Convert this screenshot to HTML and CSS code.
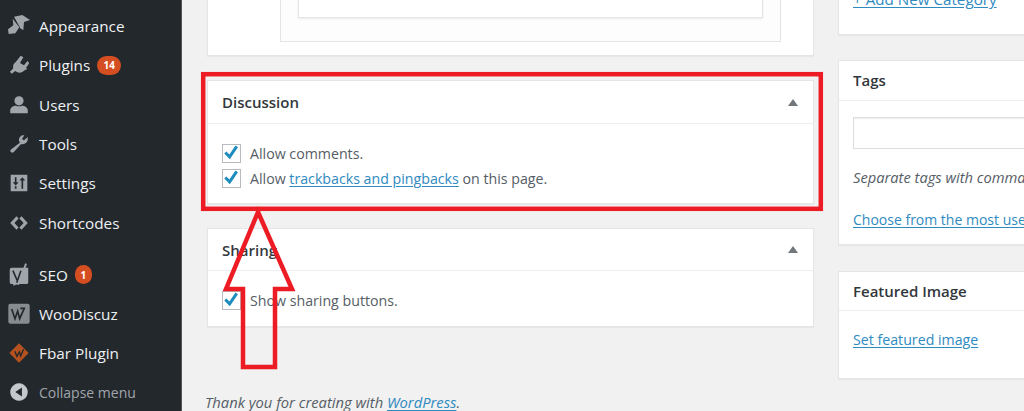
FILE: index.html
```html
<!DOCTYPE html>
<html lang="en">
<head>
<meta charset="utf-8">
<title>Edit Page</title>
<link rel="stylesheet" href="styles.css">
</head>
<body>
<div class="page">
  <nav class="sidebar">
    <a class="item"><svg class="icon big" viewBox="22 45 66 66"><path d="M40 50 L65 45 L88 60 L70 66 L68 90 L60 86 Z"/><path d="M36 56 L56 82 L48 94 L44 100 L24 102 L22 88 L38 76 Z"/></svg><span>Appearance</span></a>
    <a class="item"><svg class="icon" viewBox="25 166 60 60"><path d="M33 222 L28 216 L38 206 C35 196 41 190 46 186 L60 168 L68 173 L58 190 L70 197 L80 184 L86 190 L76 205 L80 208 L72 212 C62 222 52 220 44 214 Z"/></svg><span>Plugins</span><b class="badge wide">14</b></a>
    <a class="item"><svg class="icon" viewBox="0 0 24 24"><circle cx="12" cy="7" r="5.500"/><path d="M1.500 22 V18 C1.500 14.500 6 13 8 12.500 C10 14 14 14 16 12.500 C18 13 22.500 14.500 22.500 18 V22 Z"/></svg><span>Users</span></a>
    <a class="item"><svg class="icon" viewBox="0 0 24 24"><path d="M22.500 3.500 L18 7.500 L15.500 6 L18.500 1.500 C15 1 11.500 3.500 12 8 L13 10.500 L2 19 C.5 21 3 23.500 5.500 22 L14.500 12 C18 13 22 11 22.500 7 Z"/></svg><span>Tools</span></a>
    <a class="item"><svg class="icon" viewBox="0 0 24 24"><path fill-rule="evenodd" d="M2 2 H22 V22 H2 Z M7 5 V11 H4.500 L8 15 L11.500 11 H9 V5 Z M16 5 L12.500 9 H15 V19 H17 V9 H19.500 Z M7 16 V19 H9 V16 Z"/></svg><span>Settings</span></a>
    <a class="item gap"><svg class="icon" viewBox="0 0 24 24"><path d="M9 4 L11.500 6.500 L6.500 12 L11.500 17.500 L9 20 L1.500 12 Z M15 4 L22.500 12 L15 20 L12.500 17.500 L17.500 12 L12.500 6.500 Z"/></svg><span>Shortcodes</span></a>
    <a class="item seo"><svg class="icon tall" viewBox="22 172 62 72"><path d="M30 187 H82 V232 Q82 238 76 238 H50 L35 243 V238 H30 Q24 238 24 232 V193 Q24 187 30 187 Z"/><path class="cut" d="M34 196 L47 226 M59 196 L46 234"/><path class="slash" d="M75 174 L50 240"/></svg><span>SEO</span><b class="badge">1</b></a>
    <a class="item"><svg class="icon big wd" viewBox="21 298 66 66"><rect x="22" y="300" width="64" height="60" rx="6"/><path class="cut" d="M32 316 L42 345 L50 322 L56 345 L70 314 H58"/></svg><span>WooDiscuz</span></a>
    <a class="item"><svg class="icon fbar" viewBox="26 414 58 58"><path d="M55 415 L83 443 L55 471 L27 443 Z"/><path class="cut thin" d="M43 438 L49 453 L56 440 L60 452 L68 432"/></svg><span>Fbar Plugin</span></a>
    <a class="item collapse"><svg class="icon" viewBox="0 0 24 24"><path fill-rule="evenodd" d="M12 1.500 A10.500 10.500 0 1 1 11.990 1.500 Z M15.500 6.500 L7.500 12 L15.500 17.500 Z"/></svg><span>Collapse menu</span></a>
  </nav>

  <div class="content">
    <div class="columns">
      <main class="main-col">
        <section class="card top-card">
          <div class="tab-panel">
            <div class="tab-inner"></div>
          </div>
        </section>

        <section class="card discussion">
          <header class="card-head"><h2>Discussion</h2><i class="caret"></i></header>
          <div class="card-body checks">
            <label class="check"><svg class="box" viewBox="0 0 20 20"><rect x=".5" y=".5" width="19" height="19"/><path d="M3.500 9 L8 13.500 L15.500 2.500"/></svg>Allow comments.</label>
            <label class="check"><svg class="box" viewBox="0 0 20 20"><rect x=".5" y=".5" width="19" height="19"/><path d="M3.500 9 L8 13.500 L15.500 2.500"/></svg><span>Allow <a class="link">trackbacks and pingbacks</a> on this page.</span></label>
          </div>
        </section>

        <section class="card sharing">
          <header class="card-head"><h2>Sharing</h2><i class="caret"></i></header>
          <div class="card-body checks">
            <label class="check"><svg class="box" viewBox="0 0 20 20"><rect x=".5" y=".5" width="19" height="19"/><path d="M3.500 9 L8 13.500 L15.500 2.500"/></svg>Show sharing buttons.</label>
          </div>
        </section>
      </main>

      <aside class="side-col">
        <section class="card cat-card"><a class="link">+ Add New Category</a></section>

        <section class="card tags">
          <header class="card-head"><h2>Tags</h2></header>
          <div class="card-body">
            <div class="tag-input"></div>
            <p class="hint">Separate tags with commas</p>
            <a class="link">Choose from the most used tags</a>
          </div>
        </section>

        <section class="card featured">
          <header class="card-head"><h2>Featured Image</h2></header>
          <div class="card-body"><a class="link">Set featured image</a></div>
        </section>
      </aside>
    </div>
    <p class="thanks">Thank you for creating with <a class="link">WordPress</a>.</p>
  </div>

  <svg class="annotation" viewBox="0 0 1024 411" aria-hidden="true">
    <rect x="203.200" y="74.200" width="617.600" height="134.600"/>
    <path d="M258 212 L226 289 H243 V367 H275 V289 H292 Z"/>
  </svg>
</div>
</body>
</html>
```
FILE: styles.css
```css
* { box-sizing: border-box; }
html, body { margin: 0; height: 100%; overflow: hidden; }
body {
  font-family: "Open Sans", "Noto Sans", sans-serif;
  font-size: 14px;
  color: #555d66;
  background: #f1f1f1;
}
.page {
  position: relative;
  display: flex;
  width: 1024px;
  height: 411px;
  overflow: hidden;
}

/* sidebar */
.sidebar {
  flex: 0 0 182px;
  background: #23282d;
  border-right: 1px solid #555;
  padding-top: 6.400px;
  color: #eef1f3;
}
.item {
  display: flex;
  align-items: center;
  height: 39.300px;
  font-size: 15.300px;
}
.item.gap { margin-bottom: 12.700px; }
.icon {
  flex: none;
  width: 20px;
  height: 20px;
  margin: 0 10px 0 9px;
  fill: #a0a5aa;
}
.icon.big { width: 22px; height: 22px; margin: 0 9px 0 8px; }
.icon.tall { height: 23px; margin-bottom: 1px; }
.icon.wd { fill: #888c90; }
.icon.fbar { fill: #b5521f; }
.cut { fill: none; stroke: #23282d; stroke-width: 5; }
.cut.thin { stroke-width: 4; }
.slash { fill: none; stroke: #a0a5aa; stroke-width: 6; }
.collapse { color: #a0a5aa; font-size: 14px; }
.collapse .icon { fill: #c5c8cb; }
.badge {
  display: flex;
  align-items: center;
  justify-content: center;
  width: 17px;
  height: 19px;
  margin-left: 7px;
  border-radius: 10px;
  background: #d54e21;
  color: #fff;
  font-size: 10px;
  font-weight: 700;
}
.badge.wide { width: 24px; }

/* content */
.content { flex: 1 0 auto; width: 842px; padding-left: 26px; }
.columns { display: flex; gap: 24px; align-items: flex-start; height: 383.500px; margin-left: -1px; }
.main-col { flex: 0 0 607px; }
.side-col { flex: 0 0 260px; }
.card {
  background: #fff;
  border: 1px solid #e5e5e5;
  box-shadow: 0 1px 1px rgba(0,0,0,.04);
}
.top-card {
  height: 56px;
  border-top: 0;
  padding: 0 32px 0 72px;
  margin-bottom: 24px;
}
.tab-panel {
  height: 42px;
  background: #fdfdfd;
  border: 1px solid #e5e5e5;
  border-top: 0;
  padding: 0 17px;
}
.tab-inner {
  height: 18px;
  background: #fff;
  border: 1px solid #e5e5e5;
  border-top: 0;
  box-shadow: 0 1px 2px rgba(0,0,0,.08);
}
.card-head {
  display: flex;
  align-items: center;
  justify-content: space-between;
  padding: 0 14px;
  border-bottom: 1px solid #eee;
}
.card-head h2 {
  margin: 0;
  font-size: 15px;
  font-weight: 600;
  color: #32373c;
}
.caret {
  width: 0;
  height: 0;
  margin-right: 1px;
  border: 5px solid transparent;
  border-top: 0;
  border-bottom: 7px solid #72777c;
}
.card-body { padding: 0 14px; }

.discussion { height: 124px; margin-bottom: 24px; }
.discussion .card-head { height: 43px; }
.discussion .checks { padding-top: 17px; }
.sharing { height: 98.500px; }
.sharing .card-head { height: 42px; }
.sharing .checks { padding-top: 17px; }
.check {
  display: flex;
  align-items: center;
  height: 25px;
  font-size: 14.200px;
}
.box { flex: none; width: 19px; height: 19px; margin-right: 9px; }
.box rect { fill: #fff; stroke: #b4b9be; stroke-width: 1; }
.box path { fill: none; stroke: #1e8cbe; stroke-width: 3.200; }
.link { color: #2f8abf; text-decoration: underline; text-underline-offset: 2px; white-space: nowrap; }

.cat-card { height: 44px; padding-left: 14px; margin-top: -9px; margin-bottom: 25px; line-height: 17px; border-top: 0; font-size: 15.200px; }
.tags { height: 185px; margin-bottom: 26px; }
.tags .card-head { height: 40px; padding-bottom: 1px; }
.tag-input { width: 240px; height: 32px; margin-top: 16px; border: 1px solid #ddd; box-shadow: inset 0 1px 2px rgba(0,0,0,.07); }
.hint { margin: 18px 0 23px; font-style: italic; font-size: 14.700px; line-height: 20px; white-space: nowrap; }
.tags .link { display: block; line-height: 20px; }
.featured { height: 108px; }
.featured .card-head { height: 39px; }
.featured .card-body { padding-top: 19px; line-height: 20px; font-size: 14.200px; }
.thanks { margin: 8px 0 0 -3px; font-style: italic; font-size: 14.750px; line-height: 20px; }

/* annotation drawn over the screenshot */
.annotation {
  position: absolute;
  left: 0;
  top: 0;
  width: 1024px;
  height: 411px;
  fill: none;
  stroke: #ed1c24;
  stroke-width: 4.500px;
  pointer-events: none;
}
```
